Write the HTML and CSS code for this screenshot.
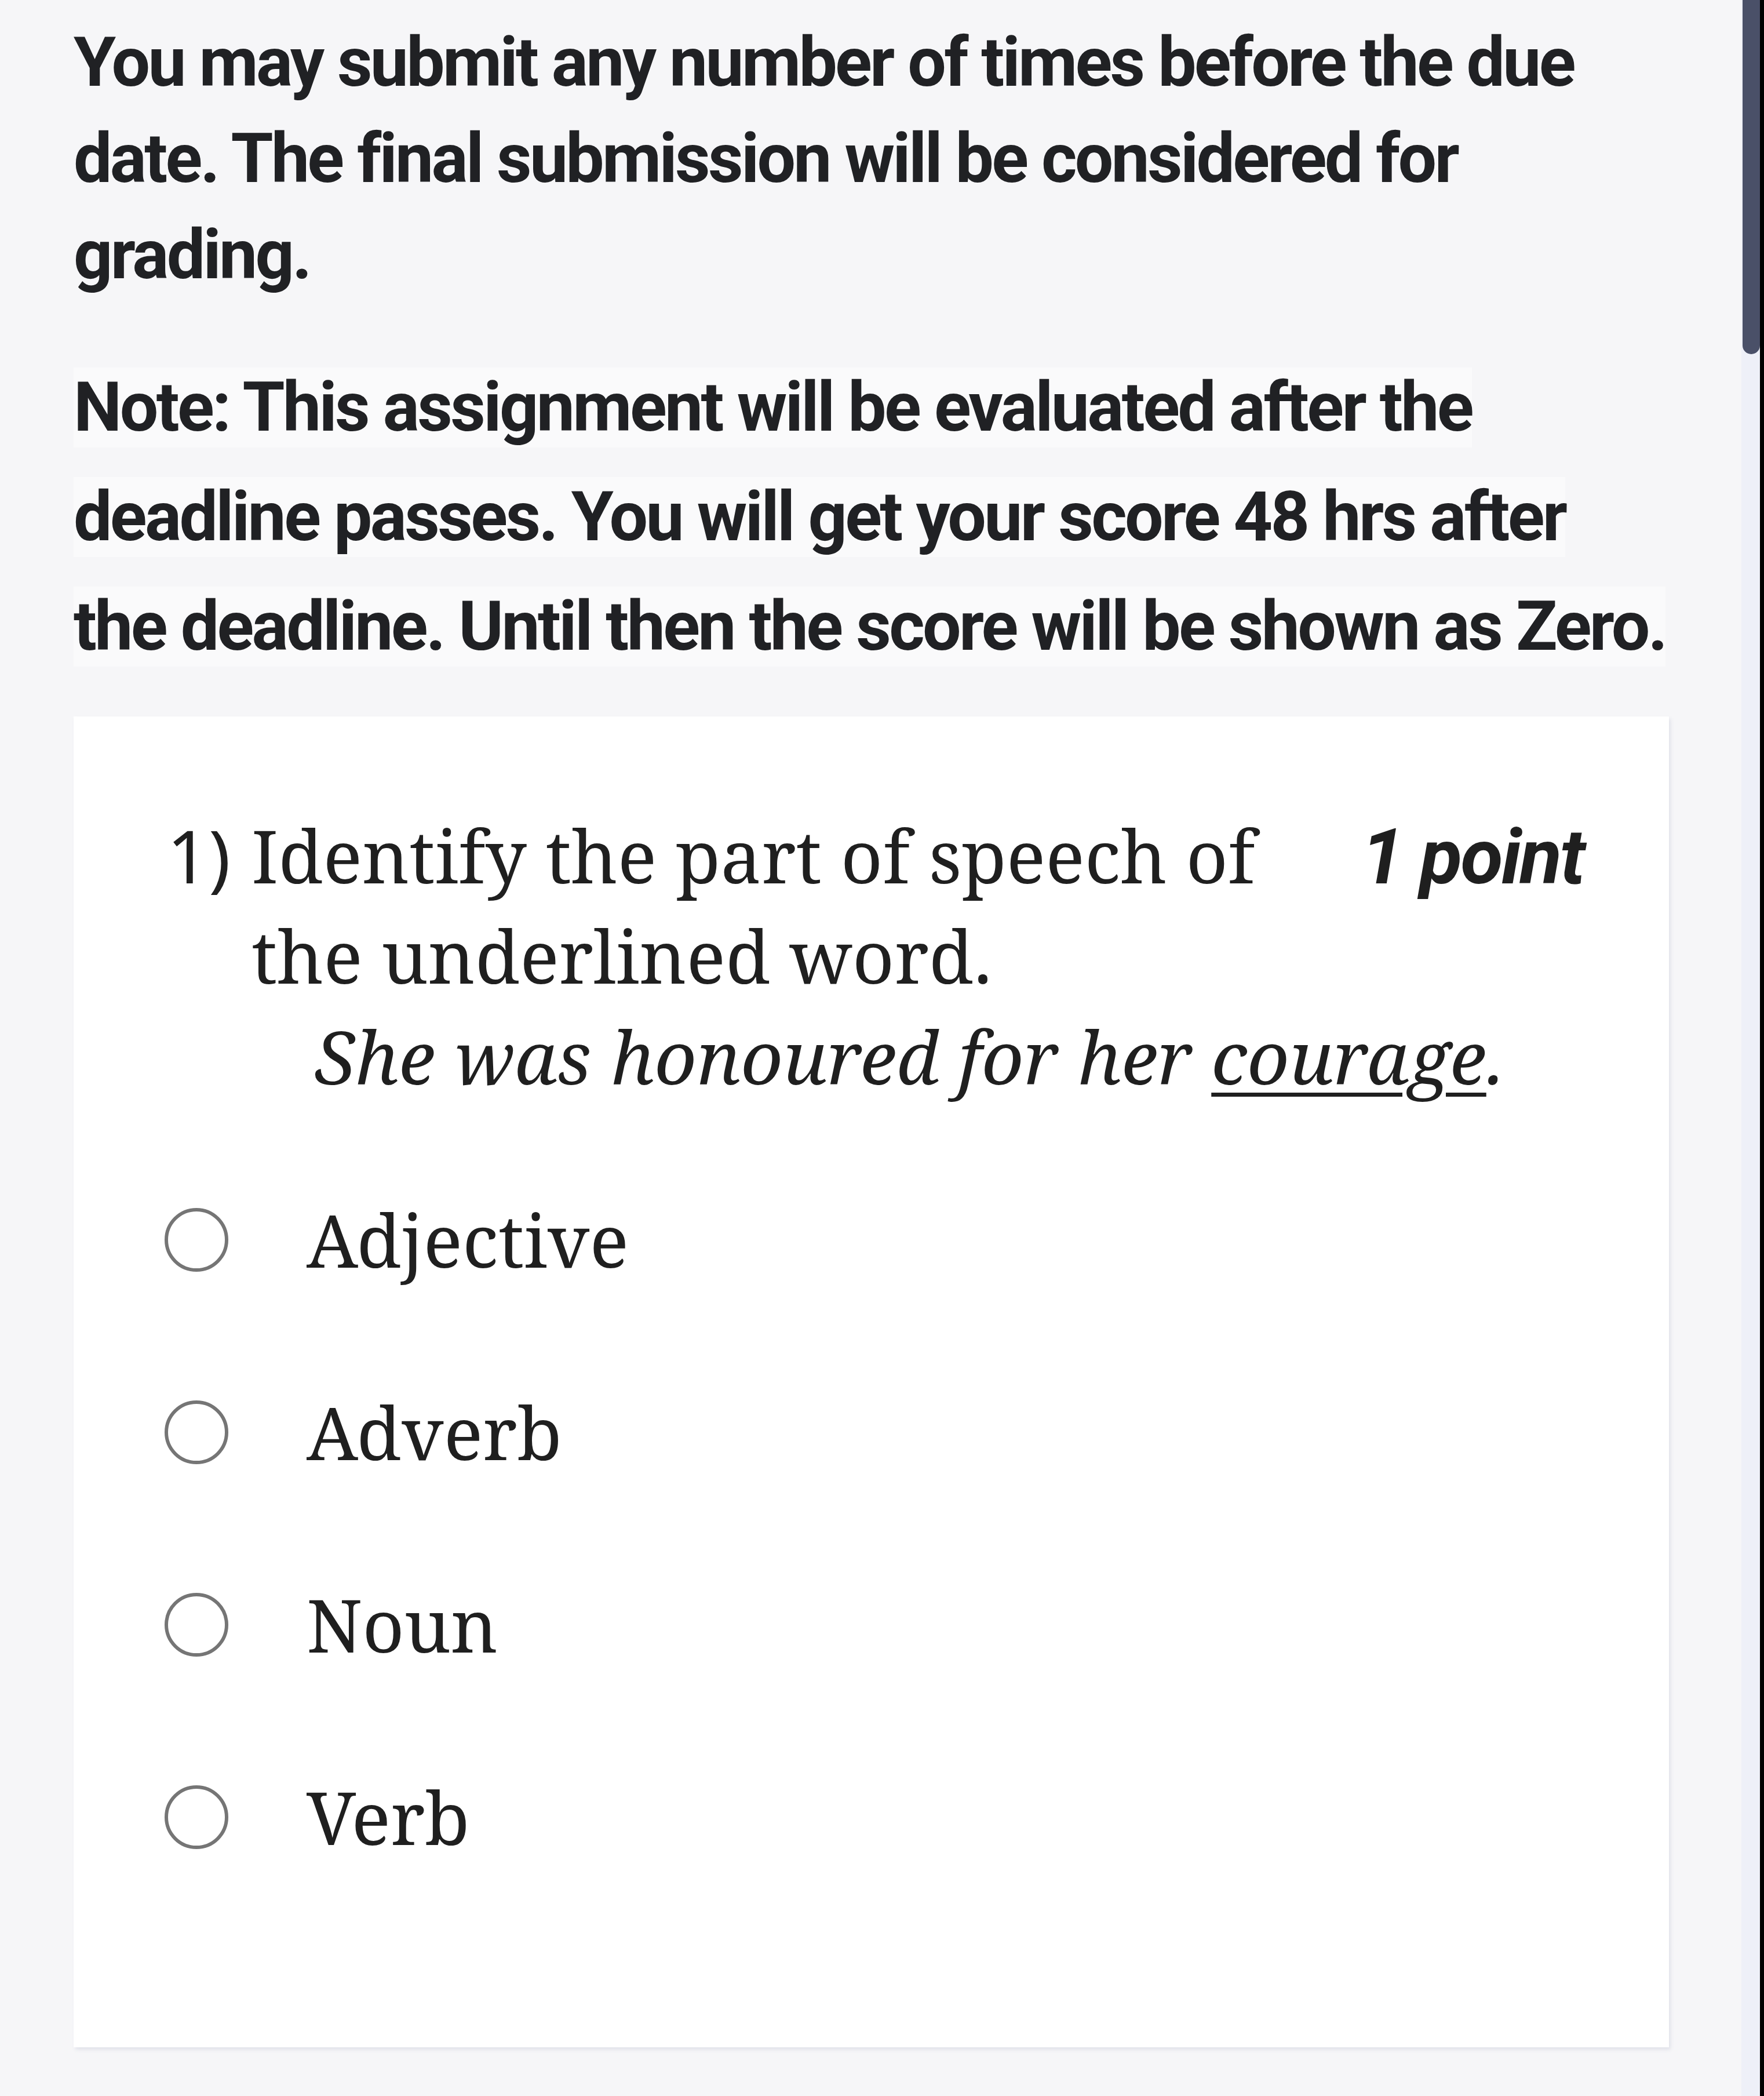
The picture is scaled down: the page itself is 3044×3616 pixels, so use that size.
FILE: index.html
```html
<!DOCTYPE html>
<html lang="en">

<head>
    <meta charset="UTF-8">
    <meta name="viewport" content="width=device-width, initial-scale=1.0">
    <title>Assignment</title>
    <link rel="stylesheet" href="styles.css">
</head>

<body>
    <div class="page">
        <p class="intro">You may submit any number of times before the due date. The final submission will be considered for grading.</p>

        <p class="note"><span>Note: This assignment will be evaluated after the deadline passes. You will get your score 48 hrs after the deadline. Until then the score will be shown as Zero.</span></p>

        <div class="qcard">
            <div class="qcard_head">
                <div class="qcard_num">1)</div>
                <div class="qcard_title">Identify the part of speech of the underlined word.</div>
                <div class="qcard_points">1 point</div>
                <div class="qcard_example">She was honoured for her <u>courage</u>.</div>
            </div>

            <div class="qcard_options">
                <label class="qcard_option"><span class="radio"></span>Adjective</label>
                <label class="qcard_option"><span class="radio"></span>Adverb</label>
                <label class="qcard_option"><span class="radio"></span>Noun</label>
                <label class="qcard_option"><span class="radio"></span>Verb</label>
            </div>
        </div>
    </div>

    <!-- полоса прокрутки справа -->
    <div class="scrollbar">
        <div class="scrollbar_thumb"></div>
    </div>
</body>

</html>
```

FILE: styles.css
```css
* {
    box-sizing: border-box;
}

body {
    margin: 0;
    font-family: "Roboto", "Liberation Sans", sans-serif;
    color: #202124;
    background-color: #f6f6f8;
}

.page {
    padding: 25px 164px 90px 127px;
}

.intro {
    margin: 0;
    font-size: 118px;
    font-weight: 700;
    line-height: 166px;
    letter-spacing: -3.7px;
}

.note {
    margin: 86px 0 0;
    font-size: 118px;
    font-weight: 700;
    line-height: 189px;
    letter-spacing: -3.6px;
}

.note span {
    background-color: #fafafb;
}

.qcard {
    margin-top: 60px;
    background-color: #fff;
    box-shadow: 3px 4px 6px rgba(80, 90, 140, 0.12);
    padding: 153px 147px 311px 157px;
}

.qcard_head {
    display: grid;
    grid-template-columns: 150px 1fr auto;
    align-items: baseline;
    font-family: "Noto Serif", "DejaVu Serif", serif;
    font-size: 126px;
    line-height: 173px;
    color: #1f1f1f;
}

.qcard_num {
    font-family: "Noto Sans", "Open Sans", sans-serif;
    padding-left: 4px;
}

.qcard_points {
    font-family: "Roboto", "Liberation Sans", sans-serif;
    font-size: 134px;
    font-weight: 700;
    font-style: italic;
    letter-spacing: -3px;
    padding-left: 110px;
}

.qcard_example {
    grid-column: 2 / 4;
    padding-left: 109px;
    font-style: italic;
    font-size: 127px;
}

.qcard_example u {
    text-decoration-thickness: 7px;
    text-underline-offset: 14px;
}

.qcard_options {
    margin-top: 144px;
    display: flex;
    flex-direction: column;
    gap: 159px;
}

.qcard_option {
    display: flex;
    align-items: center;
    font-family: "Noto Serif", "DejaVu Serif", serif;
    font-size: 126px;
    line-height: 173px;
    color: #1f1f1f;
}

.qcard_option .radio {
    width: 110px;
    height: 110px;
    border: 6px solid #757575;
    border-radius: 50%;
    margin-right: 135px;
    flex-shrink: 0;
}

.scrollbar {
    position: fixed;
    top: 0;
    right: 0;
    width: 39px;
    height: 100%;
    background-color: #eef0f8;
    border-right: 7px solid #000;
}

.scrollbar_thumb {
    width: 30px;
    height: 611px;
    margin-left: 2px;
    background-color: #4a5068;
    border-radius: 0 0 15px 15px;
}
```
